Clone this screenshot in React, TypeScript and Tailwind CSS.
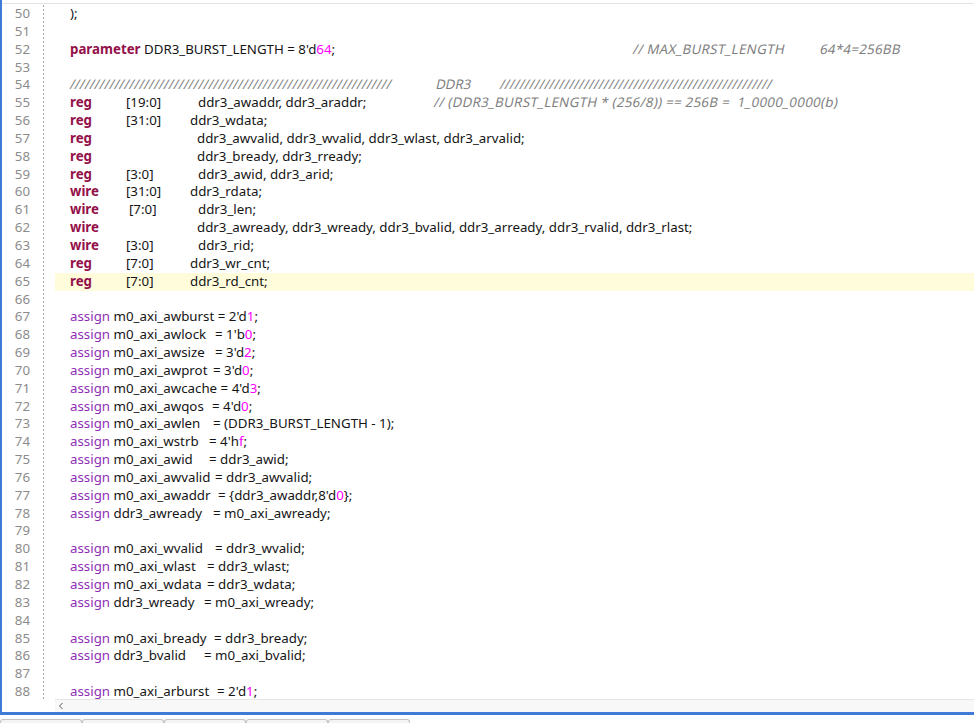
import React from 'react';

const Kw = ({ children }: { children: React.ReactNode }) => (
  <span className="inline-block w-[56px] font-bold text-[#94104a]">{children}</span>
);
const N = ({ children }: { children: React.ReactNode }) => <span className="text-[#ff00ff]">{children}</span>;
// editor draws comments as slanted regular glyphs, so skew instead of using the italic face
const Cm = ({ children, wide }: { children: React.ReactNode; wide?: boolean }) => (
  <span className={`inline-block -skew-x-12 text-[#7f7f7f] ${wide ? 'tracking-[0.3px]' : ''}`}>{children}</span>
);

// assign line: lhs padded to the column where "=" sits
const As = ({ w, lhs, children }: { w: string; lhs: string; children: React.ReactNode }) => (
  <>
    <span className={`inline-block ${w}`}>
      <span className="text-[#8f2fb5]">assign</span> {lhs}{' '}
    </span>
    = {children}
  </>
);

const rows: [number, React.ReactNode, boolean?][] = [
  [50, <>);</>],
  [51, null],
  [
    52,
    <>
      <span className="inline-block w-[563px]">
        <span className="font-bold text-[#94104a]">parameter</span> DDR3_BURST_LENGTH = 8'd<N>64</N>;
      </span>
      <Cm wide>
        <span className="inline-block w-[187px]">// MAX_BURST_LENGTH</span>64*4=256BB
      </Cm>
    </>,
  ],
  [53, null],
  [
    54,
    <Cm>
      <span className="inline-block w-[366px]">{'/'.repeat(65)}</span>
      <span className="inline-block w-[64px]">DDR3</span>
      {'/'.repeat(55)}
    </Cm>,
  ],
  [
    55,
    <>
      <span className="inline-block w-[364px]">
        <Kw>reg</Kw>
        <span className="inline-block w-[72px]">[19:0]</span>ddr3_awaddr, ddr3_araddr;
      </span>
      <Cm wide>// (DDR3_BURST_LENGTH * (256/8)) == 256B =  1_0000_0000(b)</Cm>
    </>,
  ],
  [56, <><Kw>reg</Kw><span className="inline-block w-[64px]">[31:0]</span>ddr3_wdata;</>],
  [57, <><Kw>reg</Kw><span className="inline-block w-[71px]" />ddr3_awvalid, ddr3_wvalid, ddr3_wlast, ddr3_arvalid;</>],
  [58, <><Kw>reg</Kw><span className="inline-block w-[71px]" />ddr3_bready, ddr3_rready;</>],
  [59, <><Kw>reg</Kw><span className="inline-block w-[72px]">[3:0]</span>ddr3_awid, ddr3_arid;</>],
  [60, <><Kw>wire</Kw><span className="inline-block w-[64px]">[31:0]</span>ddr3_rdata;</>],
  [61, <><Kw>wire</Kw><span className="inline-block w-[72px] pl-[3px]">[7:0]</span>ddr3_len;</>],
  [62, <><Kw>wire</Kw><span className="inline-block w-[71px]" />ddr3_awready, ddr3_wready, ddr3_bvalid, ddr3_arready, ddr3_rvalid, ddr3_rlast;</>],
  [63, <><Kw>wire</Kw><span className="inline-block w-[72px]">[3:0]</span>ddr3_rid;</>],
  [64, <><Kw>reg</Kw><span className="inline-block w-[64px]">[7:0]</span>ddr3_wr_cnt;</>],
  [65, <><Kw>reg</Kw><span className="inline-block w-[64px]">[7:0]</span>ddr3_rd_cnt;</>, true],
  [66, null],
  [67, <As w="min-w-[147px]" lhs="m0_axi_awburst">2'd<N>1</N>;</As>],
  [68, <As w="min-w-[145px]" lhs="m0_axi_awlock">1'b<N>0</N>;</As>],
  [69, <As w="min-w-[145px]" lhs="m0_axi_awsize">3'd<N>2</N>;</As>],
  [70, <As w="min-w-[143px]" lhs="m0_axi_awprot">3'd<N>0</N>;</As>],
  [71, <As w="min-w-[147px]" lhs="m0_axi_awcache">4'd<N>3</N>;</As>],
  [72, <As w="min-w-[142px]" lhs="m0_axi_awqos">4'd<N>0</N>;</As>],
  [73, <As w="min-w-[143px]" lhs="m0_axi_awlen">(DDR3_BURST_LENGTH - 1);</As>],
  [74, <As w="min-w-[139px]" lhs="m0_axi_wstrb">4'h<N>f</N>;</As>],
  [75, <As w="min-w-[139px]" lhs="m0_axi_awid">ddr3_awid;</As>],
  [76, <As w="min-w-[145px]" lhs="m0_axi_awvalid">ddr3_awvalid;</As>],
  [77, <As w="min-w-[148px]" lhs="m0_axi_awaddr">{'{'}ddr3_awaddr,8'd<N>0</N>{'}'};</As>],
  [78, <As w="min-w-[143px]" lhs="ddr3_awready">m0_axi_awready;</As>],
  [79, null],
  [80, <As w="min-w-[145px]" lhs="m0_axi_wvalid">ddr3_wvalid;</As>],
  [81, <As w="min-w-[137px]" lhs="m0_axi_wlast">ddr3_wlast;</As>],
  [82, <As w="min-w-[137px]" lhs="m0_axi_wdata">ddr3_wdata;</As>],
  [83, <As w="min-w-[134px]" lhs="ddr3_wready">m0_axi_wready;</As>],
  [84, null],
  [85, <As w="min-w-[144px]" lhs="m0_axi_bready">ddr3_bready;</As>],
  [86, <As w="min-w-[134px]" lhs="ddr3_bvalid">m0_axi_bvalid;</As>],
  [87, null],
  [88, <As w="min-w-[147px]" lhs="m0_axi_arburst">2'd<N>1</N>;</As>],
];

export default function App() {
  return (
    <div className="w-[974px] h-[723px] bg-white overflow-hidden flex flex-col font-['Noto_Sans',sans-serif] text-[13.3px] text-[#151515]">
      {/* Editor */}
      <div className="h-[715px] shrink-0 flex flex-col border-l-2 border-b-[3px] border-[#3f7bd6]">
        <div className="h-[3px] shrink-0" />
        <div className="h-[1px] shrink-0 bg-[#e2e2e2]" />
        <div className="h-[1px] shrink-0" />

        <div className="flex-1 min-h-0 flex overflow-hidden">
          {/* Gutter */}
          <div className="w-[53px] shrink-0 flex">
            <div className="w-[28px] text-right text-[#8c8c8c]">
              {rows.map(([n]) => (
                <div key={n} className="h-[17.85px] leading-[17.85px]">{n}</div>
              ))}
            </div>
            <div className="w-[13px]" />
            <div className="w-[1px] bg-[linear-gradient(to_bottom,#a8a8a8_50%,transparent_50%)] bg-[length:1px_4px]" />
          </div>

          {/* Code */}
          <div className="flex-1 min-w-0">
            {rows.map(([n, code, hl]) => (
              <div
                key={n}
                className={`h-[17.85px] leading-[17.85px] pl-[15px] whitespace-pre ${hl ? 'bg-[#fffcdc]' : ''}`}
              >
                {code}
              </div>
            ))}
          </div>
        </div>

        {/* Horizontal scrollbar */}
        <div className="h-[13px] shrink-0 flex">
          <div className="w-[53px] shrink-0" />
          <div className="flex-1 flex items-center border-t border-[#e6e6e6] bg-[#f8f8f8] pl-[3px]">
            <svg width="6" height="8" viewBox="0 0 6 8">
              <path d="M4.5 1 L1.5 4 L4.5 7" fill="none" stroke="#5a5a5a" strokeWidth="1" />
            </svg>
          </div>
        </div>
      </div>

      {/* Tab strip */}
      <div className="flex-1 flex items-end">
        {[0, 1, 2, 3, 4].map(i => (
          <div key={i} className="w-[82px] h-[4px] border border-b-0 border-[#c4c4c4] rounded-t-[3px] bg-[#f4f4f4]" />
        ))}
      </div>
    </div>
  );
}
